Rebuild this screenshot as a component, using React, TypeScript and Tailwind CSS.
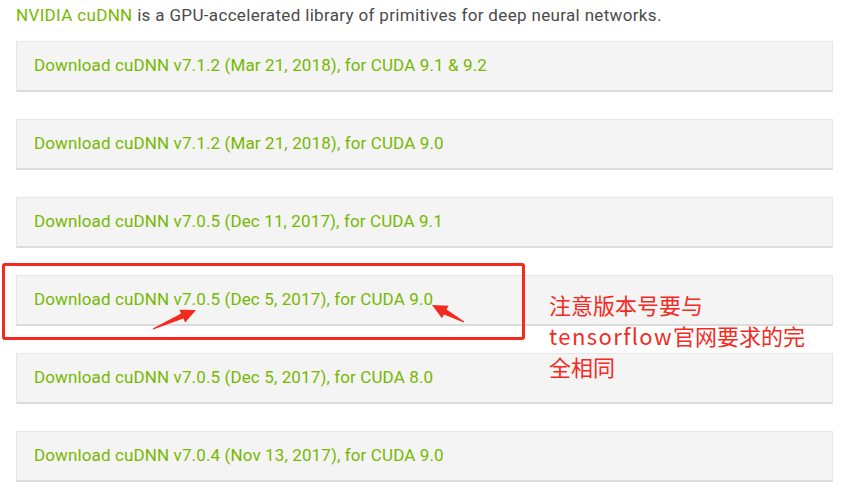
import React from "react";

const downloads = [
  "Download cuDNN v7.1.2 (Mar 21, 2018), for CUDA 9.1 & 9.2",
  "Download cuDNN v7.1.2 (Mar 21, 2018), for CUDA 9.0",
  "Download cuDNN v7.0.5 (Dec 11, 2017), for CUDA 9.1",
  "Download cuDNN v7.0.5 (Dec 5, 2017), for CUDA 9.0",
  "Download cuDNN v7.0.5 (Dec 5, 2017), for CUDA 8.0",
  "Download cuDNN v7.0.4 (Nov 13, 2017), for CUDA 9.0",
];

// red annotation arrow, drawn tail -> head
const Arrow = ({ x1, y1, x2, y2 }: { x1: number; y1: number; x2: number; y2: number }) => {
  const dx = x2 - x1;
  const dy = y2 - y1;
  const len = Math.hypot(dx, dy);
  const ux = dx / len;
  const uy = dy / len;
  const nx = -uy;
  const ny = ux;
  const headLen = 15;
  const bx = x2 - ux * headLen;
  const by = y2 - uy * headLen;
  const pts = [
    [x1 + nx * 0.5, y1 + ny * 0.5],
    [bx + nx * 2.8, by + ny * 2.8],
    [bx + nx * 7, by + ny * 7],
    [x2, y2],
    [bx - nx * 7, by - ny * 7],
    [bx - nx * 2.8, by - ny * 2.8],
    [x1 - nx * 0.5, y1 - ny * 0.5],
  ]
    .map((p) => p.join(","))
    .join(" ");
  return <polygon points={pts} fill="#f52a1f" />;
};

export default function App() {
  return (
    <div
      className="relative w-[842px] h-[488px] overflow-hidden bg-white"
      style={{ fontFamily: "Roboto, 'Liberation Sans', sans-serif" }}
    >
      <p className="pl-[16px] pt-[4px] h-[41px] text-[17px] leading-[22px] tracking-[0.34px] text-[#4a4a4a]">
        <span className="text-[#76b900]">NVIDIA cuDNN</span> is a GPU-accelerated library of
        primitives for deep neural networks.
      </p>

      <div className="ml-[16px] w-[817px] flex flex-col gap-[27px]">
        {downloads.map((d) => (
          <div
            key={d}
            className="h-[51px] flex items-center pl-[17px] bg-[#f4f4f4] border border-[#e6e6e6] border-b-2 border-b-[#dcdcdc]"
          >
            <span className="text-[17px] tracking-[0.12px] text-[#76b900]">{d}</span>
          </div>
        ))}
      </div>

      {/* annotation overlay */}
      <div className="absolute left-[2px] top-[263px] w-[523px] h-[77px] border-[3px] border-[#f52a1f] rounded-[3px]" />
      <svg className="absolute left-0 top-0" width="842" height="488">
        <Arrow x1={153} y1={329} x2={196} y2={310} />
        <Arrow x1={464} y1={322} x2={432} y2={305} />
      </svg>
      <div
        className="absolute left-[549px] top-[289px] text-[22px] leading-[31px] text-[#f52a1f]"
        style={{ fontFamily: "'Noto Sans CJK SC', 'Noto Sans', sans-serif" }}
      >
        注意版本号要与
        <br />
        <span className="tracking-[1.4px]">tensorflow</span>官网要求的完
        <br />
        全相同
      </div>
    </div>
  );
}
